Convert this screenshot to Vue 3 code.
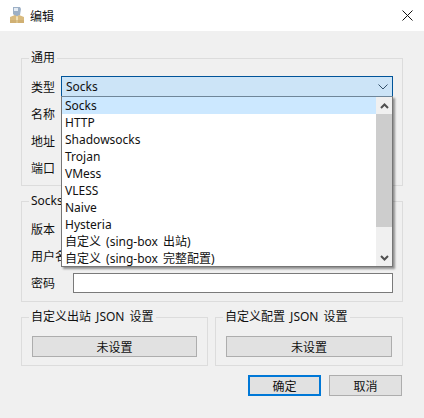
<script setup>
const items = ['Socks', 'HTTP', 'Shadowsocks', 'Trojan', 'VMess', 'VLESS', 'Naive', 'Hysteria', '自定义 (sing-box 出站)', '自定义 (sing-box 完整配置)']
</script>

<template>
  <div class="window">
    <header class="titlebar">
      <svg class="app-icon" width="16" height="17" viewBox="0 0 16 17">
        <path d="M4 0h7l1 2-1 6-2 1H6L4 7z" fill="#9db0c6" />
        <path d="M5 1h4v3H5z" fill="#e4ebf3" />
        <path d="M1 10l5-2 2 1.500L10 8l5 2v6H1z" fill="#d9bb80" />
        <path d="M7 9.500h2V16H7z" fill="#f1dfb4" />
        <path d="M1 13h14v3H1z" fill="#c9a768" opacity=".55" />
      </svg>
      <span class="title">编辑</span>
      <svg class="close" width="11" height="11" viewBox="0 0 11 11">
        <path d="M.5.5l10 10M10.500.5l-10 10" stroke="#111" stroke-width="1" fill="none" />
      </svg>
    </header>
    <main class="content">
      <fieldset class="group first">
        <legend>通用</legend>
        <div class="rows short">
          <label>类型</label>
          <div class="combo-wrap">
            <div class="combo">
              <span>Socks</span>
              <svg width="10" height="6" viewBox="0 0 10 6">
                <path d="M.5.5L5 5 9.500.5" stroke="#33506a" fill="none" />
              </svg>
            </div>
            <div class="popup">
              <ul class="list">
                <li v-for="(item, i) in items" :key="item" :class="{ active: i === 0 }">{{ item }}</li>
              </ul>
              <div class="scrollbar">
                <div class="arrow">
                  <svg width="9" height="6" viewBox="0 0 9 6"><path d="M1 5l3.500-3.500L8 5" stroke="#505050" stroke-width="2" fill="none" /></svg>
                </div>
                <div class="thumb"></div>
                <div class="track"></div>
                <div class="arrow">
                  <svg width="9" height="6" viewBox="0 0 9 6"><path d="M1 1l3.500 3.500L8 1" stroke="#505050" stroke-width="2" fill="none" /></svg>
                </div>
              </div>
            </div>
          </div>
          <label>名称</label>
          <div class="input"></div>
          <label>地址</label>
          <div class="input"></div>
          <label>端口</label>
          <div class="input"></div>
        </div>
      </fieldset>
      <fieldset class="group second">
        <legend>Socks</legend>
        <div class="rows wide">
          <label>版本</label>
          <div class="input tall"></div>
          <label>用户名</label>
          <div class="input thin"></div>
          <label>密码</label>
          <div class="input thin"></div>
        </div>
      </fieldset>
      <div class="json-groups">
        <fieldset class="group third">
          <legend>自定义出站 JSON 设置</legend>
          <button class="btn">未设置</button>
        </fieldset>
        <fieldset class="group third">
          <legend>自定义配置 JSON 设置</legend>
          <button class="btn">未设置</button>
        </fieldset>
      </div>
      <div class="actions">
        <button class="btn action primary">确定</button>
        <button class="btn action">取消</button>
      </div>
    </main>
  </div>
</template>

<style scoped>
.window {
  width: 424px;
  height: 418px;
  display: flex;
  flex-direction: column;
  overflow: hidden;
  font-family: "Noto Sans", "Noto Sans CJK SC", sans-serif;
  font-size: 12px;
  word-spacing: 2px;
  color: #111;
  background: #f0f0f0;
}
.titlebar {
  height: 31px;
  flex: none;
  display: flex;
  align-items: center;
  padding: 0 11px 0 9px;
  background: #fff;
}
.app-icon {
  margin-right: 5px;
}
.close {
  margin-left: auto;
}
.content {
  flex: 1;
  padding: 19px 21px 0;
}
.group {
  margin: 0;
  padding: 0 9px;
  min-width: 0;
  border: 1px solid #dcdcdc;
}
.group legend {
  margin-left: -2px;
  padding: 0 2px;
  height: 16px;
  line-height: 16px;
}
.first {
  padding-top: 10px;
  padding-bottom: 7px;
}
.second {
  margin-top: 7px;
  padding-top: 9px;
  padding-bottom: 8px;
}
.third {
  padding: 11px 10px 8px;
}
.group.third legend {
  margin-left: -3px;
}
.rows {
  display: grid;
  align-items: center;
  column-gap: 6px;
}
.short {
  grid-template-columns: 24px 1fr;
  row-gap: 6px;
}
.wide {
  grid-template-columns: 36px 1fr;
  row-gap: 7px;
}
.input {
  height: 21px;
  box-sizing: border-box;
  background: #fff;
  border: 1px solid #7a7a7a;
}
.input.tall {
  height: 21px;
}
.input.thin {
  height: 20px;
}
.combo-wrap {
  position: relative;
}
.combo {
  height: 21px;
  box-sizing: border-box;
  display: flex;
  align-items: center;
  justify-content: space-between;
  padding: 0 4px;
  background: #cce4f7;
  border: 1px solid #005499;
}
.popup {
  position: absolute;
  z-index: 2;
  top: calc(100% - 1px);
  left: 0;
  right: 0;
  height: 171px;
  box-sizing: border-box;
  display: flex;
  background: #fff;
  border: 1px solid #767676;
  border-top-color: #6f8699;
  box-shadow: 2px 2px 2px rgba(0, 0, 0, 0.4);
}
.list {
  flex: 1;
  margin: 0;
  padding: 0;
  list-style: none;
}
.list li {
  height: 17px;
  line-height: 17px;
  padding-left: 3px;
  white-space: nowrap;
}
.list li.active {
  background: #cce8ff;
}
.scrollbar {
  width: 16px;
  flex: none;
  display: flex;
  flex-direction: column;
  background: #f0f0f0;
}
.arrow {
  height: 17px;
  flex: none;
  display: flex;
  align-items: center;
  justify-content: center;
}
.thumb {
  height: 113px;
  flex: none;
  background: #cdcdcd;
}
.track {
  flex: 1;
}
.json-groups {
  margin-top: 7px;
  display: grid;
  grid-template-columns: 187px 188px;
  column-gap: 7px;
}
.btn {
  display: block;
  width: 100%;
  height: 21px;
  padding: 0;
  box-sizing: border-box;
  font: inherit;
  word-spacing: inherit;
  color: #111;
  background: #e1e1e1;
  border: 1px solid #adadad;
}
.actions {
  margin-top: 9px;
  padding-right: 1px;
  display: flex;
  justify-content: flex-end;
  gap: 8px;
}
.btn.action {
  width: 73px;
}
.btn.primary {
  border: 2px solid #0078d7;
}
</style>
